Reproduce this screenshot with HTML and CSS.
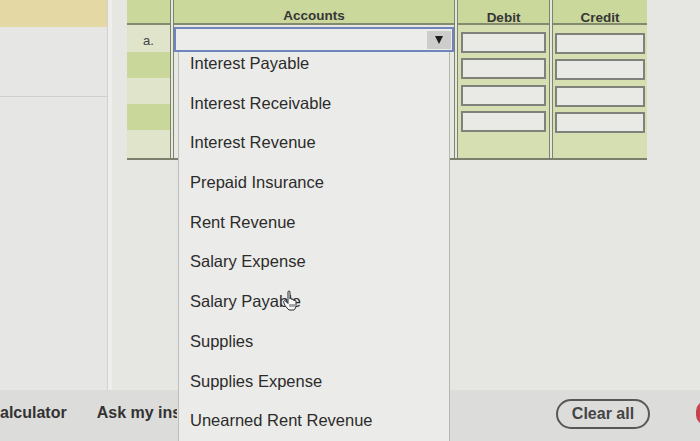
FILE: index.html
```html
<!DOCTYPE html>
<html>
<head>
<meta charset="utf-8">
<link rel="stylesheet" href="styles.css">
</head>
<body>
<div class="page">
  <div class="top">
    <div class="side">
      <div class="side-head"></div>
      <div class="side-body"></div>
    </div>
    <div class="gutter"></div>
    <div class="journal">
      <div class="col col-ref">
        <div class="hd"></div>
        <div class="ref-cell light first">a.</div>
        <div class="ref-cell dark"></div>
        <div class="ref-cell light"></div>
        <div class="ref-cell dark"></div>
        <div class="ref-cell light last"></div>
      </div>
      <div class="col col-acc">
        <div class="hd">Accounts</div>
        <div class="acc-body">
          <div class="select"><span class="arrow"><span class="tri"></span></span></div>
        </div>
      </div>
      <div class="col col-amt col-debit">
        <div class="hd hd-amt">Debit</div>
        <div class="amt-body">
          <div class="inp"></div>
          <div class="inp"></div>
          <div class="inp"></div>
          <div class="inp"></div>
        </div>
      </div>
      <div class="col col-amt col-credit">
        <div class="hd hd-amt">Credit</div>
        <div class="amt-body">
          <div class="inp"></div>
          <div class="inp"></div>
          <div class="inp"></div>
          <div class="inp"></div>
        </div>
      </div>
    </div>
  </div>
  <div class="bar">
    <span class="bar-link calc">alculator</span>
    <span class="bar-link ask">Ask my instructor</span>
    <span class="clear">Clear all</span>
    <span class="check"></span>
  </div>
  <ul class="menu">
    <li>Interest Payable</li>
    <li>Interest Receivable</li>
    <li>Interest Revenue</li>
    <li>Prepaid Insurance</li>
    <li>Rent Revenue</li>
    <li>Salary Expense</li>
    <li>Salary Payable</li>
    <li>Supplies</li>
    <li>Supplies Expense</li>
    <li>Unearned Rent Revenue</li>
  </ul>
  <svg class="cursor" viewBox="0 0 17 21" width="17" height="21">
    <path d="M6 2 C6 0.6 8 0.6 8 2 V9 C8 7.8 10 7.8 10 9 V10 C10 8.8 12 8.8 12 10 V11 C12 9.8 14 9.8 14 11 V15.5 C14 17.5 13 19 12 20 H7 C6 19 4 17 3 15.5 L1.6 12.2 C1.1 11 2.6 10.2 3.5 11 L6 13.5 Z" fill="#fafafa" stroke="#2a2a2a" stroke-width="1" stroke-linejoin="round"/>
    <path d="M8 14 V17 M10 14 V17 M12 14 V17" stroke="#2a2a2a" stroke-width="0.8"/>
  </svg>
</div>
</body>
</html>
```
FILE: styles.css
```css
* { box-sizing: border-box; }
html, body { margin: 0; padding: 0; }
body {
  background: #e5e5e2;
  font-family: "Liberation Sans", Arial, sans-serif;
  color: #333;
}
.page {
  position: relative;
  width: 700px;
  height: 441px;
  overflow: hidden;
  background: #e6e6e3;
}
.top {
  display: flex;
  height: 390px;
  align-items: flex-start;
}
.side {
  width: 108px;
  height: 100%;
  background: #e6e6e4;
  border-right: 1px solid #d2d2cf;
}
.side-head {
  height: 27px;
  background: #e4d9a5;
}
.side-body {
  height: 70px;
  border-bottom: 1px solid #cfcfcb;
}
.gutter {
  width: 19px;
  height: 100%;
  border-left: 4px solid #eeeeec;
}
.journal {
  display: flex;
  border-bottom: 2px solid #7b806c;
}
.col { display: flex; flex-direction: column; }
.hd {
  height: 25px;
  background: #cad89c;
  border-bottom: 2px solid #838a70;
  font-weight: bold;
  font-size: 13.5px;
  text-align: center;
  line-height: 31px;
  color: #363636;
}
.hd-amt { line-height: 35px; }
.col-ref { width: 43px; }
.ref-cell {
  height: 26px;
  font-size: 13px;
  color: #444;
  text-align: center;
  line-height: 32px;
}
.ref-cell.first { height: 27px; }
.ref-cell.last { height: 28px; }
.ref-cell.light { background: #dfe4ca; }
.ref-cell.dark { background: #c9d79b; }
.col-acc {
  width: 284px;
  border-left: 4px double #7c846a;
}
.acc-body {
  flex: 1;
  background: #e7e8e2;
  padding-top: 2px;
}
.select {
  height: 25px;
  border: 2px solid #7085bd;
  background: #ececea;
  display: flex;
  justify-content: flex-end;
  align-items: center;
  padding-right: 1px;
}
.arrow {
  width: 24px;
  height: 18px;
  background: #cdcdcb;
  display: flex;
  align-items: center;
  justify-content: center;
}
.tri {
  width: 0;
  height: 0;
  border-left: 4px solid transparent;
  border-right: 4px solid transparent;
  border-top: 8px solid #1e1e1e;
}
.col-amt { border-left: 4px double #7c846a; }
.col-debit { width: 95px; }
.col-credit { width: 98px; }
.amt-body {
  flex: 1;
  background: #d5dfb1;
  padding: 7px 3px 0 3px;
  display: flex;
  flex-direction: column;
  gap: 5.3px;
}
.col-credit .amt-body { padding: 8px 2px 0 2px; }
.inp {
  height: 21px;
  border: 2px solid #7f827b;
  background: #e9e9e6;
}
.bar {
  height: 51px;
  background: #dcdcda;
  display: flex;
  align-items: center;
  padding-bottom: 5px;
}
.bar-link {
  font-weight: bold;
  font-size: 16px;
  color: #333;
  white-space: nowrap;
}
.ask {
  margin-left: 30px;
  width: 80px;
  overflow: hidden;
}
.clear {
  margin-left: auto;
  width: 94px;
  height: 30px;
  border: 2px solid #585858;
  border-radius: 16px;
  font-weight: bold;
  font-size: 16px;
  color: #454545;
  display: flex;
  align-items: center;
  justify-content: center;
  margin-top: 2px;
}
.check {
  margin-left: 46px;
  margin-right: -16px;
  width: 20px;
  height: 24px;
  border-radius: 10px;
  background: #c8414d;
  flex-shrink: 0;
}
.menu {
  position: absolute;
  left: 178px;
  top: 52px;
  width: 272px;
  height: 400px;
  margin: 0;
  padding: 0;
  list-style: none;
  background: #ebebe9;
  border-left: 1px solid #bdbdba;
  border-right: 1px solid #b5b5b2;
}
.menu li {
  height: 39.7px;
  line-height: 22px;
  padding-left: 11px;
  font-size: 16.5px;
  color: #2b2b2b;
  white-space: nowrap;
}
.cursor {
  position: absolute;
  left: 282px;
  top: 290px;
}
```
